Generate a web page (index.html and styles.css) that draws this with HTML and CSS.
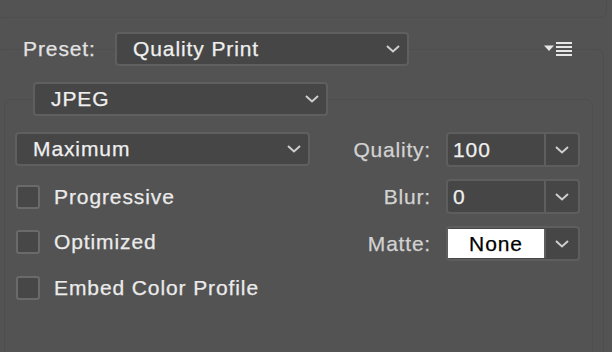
FILE: index.html
```html
<!DOCTYPE html>
<html>
<head>
<meta charset="utf-8">
<link rel="stylesheet" href="styles.css">
</head>
<body>
<div class="panel">
  <div class="ghost ghost-top"></div>
  <div class="ghost ghost-a"></div>
  <div class="ghost ghost-b"></div>

  <div class="row-preset">
    <span class="label-preset">Preset:</span>
    <div class="select select-preset">
      <span class="select-text">Quality Print</span>
      <svg class="chev" width="14" height="8" viewBox="0 0 14 8"><path d="M1 1 L7 6.5 L13 1" fill="none" stroke="#cfcfcf" stroke-width="2"/></svg>
    </div>
    <svg class="menu-icon" width="28" height="14" viewBox="0 0 28 14">
      <path d="M0 3.5 L10 3.5 L5 9 Z" fill="#e6e6e6"/>
      <rect x="12" y="0" width="16" height="2" fill="#e6e6e6"/>
      <rect x="12" y="4" width="16" height="2" fill="#e6e6e6"/>
      <rect x="12" y="8" width="16" height="2" fill="#e6e6e6"/>
      <rect x="12" y="12" width="16" height="2" fill="#e6e6e6"/>
    </svg>
  </div>

  <div class="row-format">
    <div class="select select-format">
      <span class="select-text">JPEG</span>
      <svg class="chev" width="14" height="8" viewBox="0 0 14 8"><path d="M1 1 L7 6.5 L13 1" fill="none" stroke="#cfcfcf" stroke-width="2"/></svg>
    </div>
  </div>

  <div class="options">
    <div class="col-left">
      <div class="select select-quality">
        <span class="select-text">Maximum</span>
        <svg class="chev" width="14" height="8" viewBox="0 0 14 8"><path d="M1 1 L7 6.5 L13 1" fill="none" stroke="#cfcfcf" stroke-width="2"/></svg>
      </div>
      <div class="checks">
        <label class="check"><span class="box"></span><span class="check-text">Progressive</span></label>
        <label class="check"><span class="box"></span><span class="check-text">Optimized</span></label>
        <label class="check"><span class="box"></span><span class="check-text">Embed Color Profile</span></label>
      </div>
    </div>
    <div class="col-right">
      <div class="field-row">
        <span class="field-label">Quality:</span>
        <div class="combo">
          <span class="combo-value">100</span>
          <span class="combo-btn"><svg width="14" height="8" viewBox="0 0 14 8"><path d="M1 1 L7 6.5 L13 1" fill="none" stroke="#cfcfcf" stroke-width="2"/></svg></span>
        </div>
      </div>
      <div class="field-row">
        <span class="field-label">Blur:</span>
        <div class="combo">
          <span class="combo-value">0</span>
          <span class="combo-btn"><svg width="14" height="8" viewBox="0 0 14 8"><path d="M1 1 L7 6.5 L13 1" fill="none" stroke="#cfcfcf" stroke-width="2"/></svg></span>
        </div>
      </div>
      <div class="field-row">
        <span class="field-label">Matte:</span>
        <div class="combo">
          <span class="combo-value combo-matte">None</span>
          <span class="combo-btn"><svg width="14" height="8" viewBox="0 0 14 8"><path d="M1 1 L7 6.5 L13 1" fill="none" stroke="#cfcfcf" stroke-width="2"/></svg></span>
        </div>
      </div>
    </div>
  </div>
</div>
</body>
</html>
```

FILE: styles.css
```css
* { box-sizing: border-box; }

html, body {
  margin: 0;
  padding: 0;
  background: #535353;
}

body {
  width: 612px;
  height: 352px;
  overflow: hidden;
  font-family: "Liberation Sans", Arial, sans-serif;
  font-size: 21px;
  letter-spacing: 0.9px;
  color: #ececec;
  -webkit-text-stroke: 0.25px currentColor;
}

.panel {
  position: relative;
  width: 612px;
  height: 352px;
  overflow: hidden;
  padding-top: 32px;
}

.ghost {
  position: absolute;
  border: 1px solid #4e4e4e;
  border-radius: 7px;
  pointer-events: none;
}
.ghost-top { left: -6px; top: -30px; width: 613px; height: 48px; }
.ghost-a { left: -6px; top: 49px; width: 610px; height: 400px; }
.ghost-b { left: 4px; top: 99px; width: 589px; height: 400px; }

.row-preset {
  position: relative;
  display: flex;
  align-items: center;
  height: 34px;
  padding-left: 23px;
}

.label-preset {
  width: 92px;
  color: #e2e2e2;
}

.select {
  display: flex;
  align-items: center;
  justify-content: space-between;
  height: 34px;
  background: #464646;
  border: 2px solid #5f5f5f;
  border-radius: 4px;
  padding: 0 7px 0 16px;
}

.select-text { color: #efefef; }
.chev { display: block; }

.select-preset { width: 294px; }

.menu-icon {
  margin-left: auto;
  margin-right: 40px;
}

.row-format {
  position: relative;
  margin-top: 16px;
  padding-left: 33px;
}
.select-format { width: 295px; }

.options {
  position: relative;
  display: flex;
  margin-top: 16px;
}

.col-left {
  padding-left: 15px;
  width: 431px;
}
.select-quality { width: 295px; }

.checks {
  display: flex;
  flex-direction: column;
  gap: 22.5px;
  margin-top: 19px;
  padding-left: 1px;
}

.check {
  display: flex;
  align-items: center;
  height: 23px;
}

.box {
  width: 24px;
  height: 24px;
  border: 2px solid #6a6a6a;
  border-radius: 3px;
  background: #474747;
  margin-right: 14px;
  flex: none;
}
.check-text { color: #ebebeb; }

.col-right {
  display: flex;
  flex-direction: column;
  gap: 12px;
}

.field-row {
  display: flex;
  align-items: center;
  height: 35px;
  margin-left: -80px;
}

.field-label {
  width: 80px;
  text-align: right;
  color: #d2d2d2;
  letter-spacing: 0.8px;
}

.combo {
  display: flex;
  margin-left: 15px;
  width: 134px;
  height: 35px;
  border: 2px solid #5e5e5e;
  border-radius: 4px;
  background: #464646;
}

.combo-value {
  display: flex;
  align-items: center;
  width: 98px;
  padding-left: 5px;
  color: #efefef;
  border-right: 2px solid #5e5e5e;
}

.combo-matte {
  background: #ffffff;
  color: #000000;
  justify-content: center;
  padding-left: 0;
  margin: 1px 0;
}

.combo-btn {
  flex: 1;
  display: flex;
  align-items: center;
  justify-content: center;
}
.combo-btn svg { display: block; }
```
